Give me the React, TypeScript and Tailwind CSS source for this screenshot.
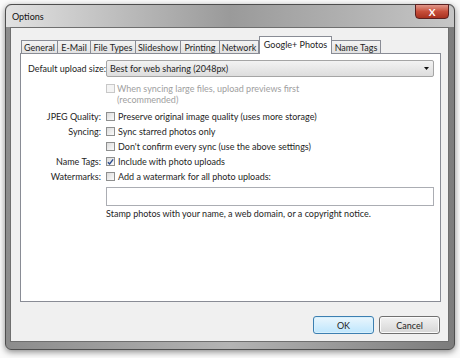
import { useState } from "react";

const tabs = [
  { label: "General", w: "w-[37px]" },
  { label: "E-Mail", w: "w-[34px]" },
  { label: "File Types", w: "w-[46px]" },
  { label: "Slideshow", w: "w-[46px]" },
  { label: "Printing", w: "w-[40px]" },
  { label: "Network", w: "w-[40px]" },
  { label: "Google+ Photos", w: "w-[73px]", active: true },
  { label: "Name Tags", w: "w-[50px]" },
];

function Check({ checked, disabled }: { checked?: boolean; disabled?: boolean }) {
  return (
    <span
      className={
        "flex h-[9px] w-[9px] shrink-0 items-center justify-center border " +
        (disabled
          ? "border-[#c8c8c8] bg-[#f4f4f4]"
          : "border-[#8e8f8f] bg-gradient-to-br from-[#dcdcdc] to-[#fbfbfb]")
      }
    >
      {checked && (
        <svg width="8" height="8" viewBox="0 0 8 8">
          <path d="M1 4.2 L3 6.3 L7 1" fill="none" stroke="#2a4b8d" strokeWidth="1.6" />
        </svg>
      )}
    </span>
  );
}

function Row({
  label,
  text,
  checked,
}: {
  label?: string;
  text: string;
  checked?: boolean;
}) {
  return (
    <div className="flex h-[15px] items-center">
      <span className="w-[78px] whitespace-nowrap pr-[5px] text-right">{label}</span>
      <Check checked={checked} />
      <span className="ml-[3px] whitespace-nowrap">{text}</span>
    </div>
  );
}

export default function App() {
  const [size] = useState("Best for web sharing (2048px)");

  return (
    <div className="h-[358px] w-[460px] overflow-hidden bg-[#fafafa] pl-[5px] pt-[4px] font-['Lato',sans-serif] text-[9px] leading-[11px] text-[#1e1e1e]">
      <div className="relative flex h-[346px] w-[450px] flex-col rounded-[6px] border border-[#4e4e4e] bg-gradient-to-r from-[#8c8c8c] via-[#b4b4b4] to-[#7c7c7c] shadow-[0_2px_6px_rgba(0,0,0,0.45)]">
        {/* Title bar */}
        <div className="flex h-[22px] items-center rounded-t-[6px] bg-gradient-to-r from-[#e2e2e2] via-[#9a9a9a] to-[#c6c6c6] pl-[6px] pt-[1px]">
          <span className="text-[#111]">Options</span>
        </div>
        <div className="absolute right-[5px] top-[-1px] flex h-[15px] w-[34px] items-center justify-center rounded-b-[4px] border border-[#5a2020] bg-gradient-to-b from-[#e0968a] via-[#c74e3a] to-[#a8311f]">
          <span className="text-[10px] font-bold leading-[10px] text-white">X</span>
        </div>

        {/* Client area */}
        <div className="mb-[7px] ml-[4px] mr-[5px] flex flex-1 flex-col border border-[#6f6f6f] bg-[#f0f0f0]">
          {/* Tabs */}
          <div className="flex h-[25px] items-end pl-[10px]">
            {tabs.map((t) =>
              t.active ? (
                <div
                  key={t.label}
                  className={`${t.w} relative z-10 -mb-px flex h-[18px] items-start justify-center border border-b-0 border-[#898c95] bg-white pt-[2px]`}
                >
                  {t.label}
                </div>
              ) : (
                <div
                  key={t.label}
                  className={`${t.w} -ml-px flex h-[13px] items-center justify-center border border-b-0 border-[#898c95] bg-gradient-to-b from-[#f3f3f3] to-[#e2e2e2] first:ml-0`}
                >
                  {t.label}
                </div>
              )
            )}
          </div>

          {/* Panel */}
          <div className="ml-[9px] flex h-[249px] w-[421px] flex-col border border-[#898c95] bg-white pl-[7px] pt-[6px]">
            <div className="flex h-[17px] items-center">
              <span className="w-[78px] whitespace-nowrap pr-[5px] text-right">Default upload size:</span>
              <div className="flex h-[17px] w-[328px] items-center justify-between rounded-[2px] border border-[#a5a5a5] bg-gradient-to-b from-[#f3f3f3] to-[#dddddd] pl-[3px] pr-[4px]">
                <span>{size}</span>
                <svg width="5" height="3" viewBox="0 0 5 3">
                  <path d="M0 0 H5 L2.5 3 Z" fill="#111" />
                </svg>
              </div>
            </div>

            <div className="ml-[78px] mt-[6px] flex items-start">
              <span className="mt-[1px]">
                <Check disabled />
              </span>
              <span className="ml-[2px] text-[#a0a0a0]">
                When syncing large files, upload previews first
                <br />
                (recommended)
              </span>
            </div>

            <div className="mt-[4px]">
              <Row label="JPEG Quality:" text="Preserve original image quality (uses more storage)" />
              <Row label="Syncing:" text="Sync starred photos only" />
              <Row text="Don't confirm every sync (use the above settings)" />
              <Row label="Name Tags:" text="Include with photo uploads" checked />
              <Row label="Watermarks:" text="Add a watermark for all photo uploads:" />
            </div>

            <div className="ml-[78px] mt-[3px] h-[19px] w-[328px] border border-[#abadb3] bg-white" />
            <div className="ml-[78px] mt-[2px]">
              Stamp photos with your name, a web domain, or a copyright notice.
            </div>
          </div>

          {/* Buttons */}
          <div className="mt-[14px] flex justify-end gap-[5px] pr-[8px]">
            <button className="h-[18px] w-[61px] rounded-[3px] border border-[#3c7fb1] bg-gradient-to-b from-[#eaf6fd] to-[#bee6fd] text-[9px] shadow-[inset_0_0_0_1px_#d8f0fc]">
              OK
            </button>
            <button className="h-[18px] w-[61px] rounded-[3px] border border-[#707070] bg-gradient-to-b from-[#f2f2f2] to-[#d6d6d6] text-[9px] shadow-[inset_0_0_0_1px_#fbfbfb]">
              Cancel
            </button>
          </div>
        </div>
      </div>
    </div>
  );
}
